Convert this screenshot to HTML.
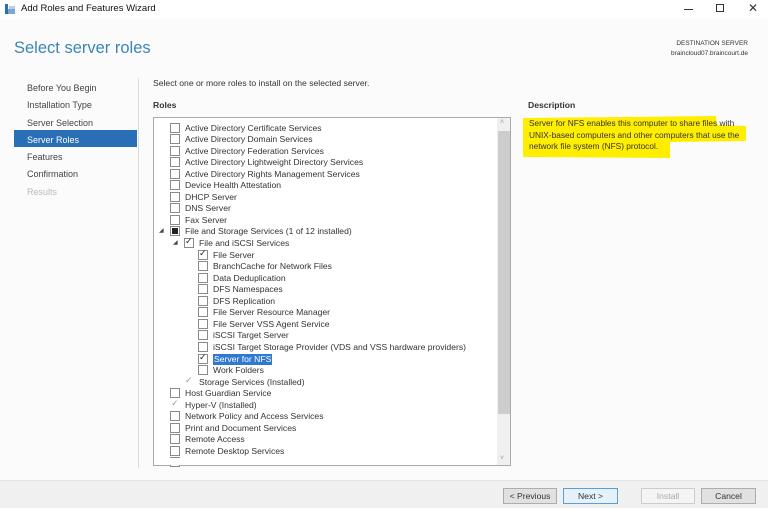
<!DOCTYPE html>
<html><head><style>
*{margin:0;padding:0;box-sizing:border-box}
body{width:768px;height:508px;overflow:hidden;background:#fbfbfb;font-family:"Liberation Sans",sans-serif;font-size:8.6px;color:#222;position:relative}
.a{position:absolute;white-space:nowrap}
.cb{position:absolute;width:10px;height:10px;border:1px solid #8a8a8a;background:#fff}
.row{position:absolute;height:11px;line-height:11px}
</style></head><body>
<div class="a" style="left:0;top:0;width:768px;height:19px;background:#fff"></div>
<svg class="a" style="left:4px;top:3px" width="12" height="12"><rect x="1" y="1" width="3" height="10" fill="#2d6db5"/><rect x="4" y="6" width="7" height="5" fill="#7aa7d6"/><rect x="5" y="3" width="6" height="3" fill="#bcd"/></svg>
<div class="a" style="left:21px;top:3px;font-size:9.5px;color:#111">Add Roles and Features Wizard</div>
<div class="a" style="left:684px;top:9px;width:9px;height:1px;background:#333"></div>
<div class="a" style="left:716px;top:4px;width:8px;height:8px;border:1px solid #333"></div>
<div class="a" style="left:748px;top:1px;font-size:12px;color:#333">✕</div>
<div class="a" style="left:14px;top:39px;font-size:16.5px;color:#3a86b8">Select server roles</div>
<div class="a" style="right:20px;top:39px;font-size:6.5px;color:#333;text-align:right;line-height:10px">DESTINATION SERVER<br>braincloud07.braincourt.de</div>
<div class="a" style="left:138px;top:78px;width:1px;height:390px;background:#ddd"></div>
<div class="a" style="left:14px;top:130px;width:123px;height:17px;background:#2a6fb5"></div>
<div class="a" style="left:27px;top:80px;font-size:9px;color:#444;line-height:17.3px">Before You Begin<br>Installation Type<br>Server Selection<br><span style="color:#fff">Server Roles</span><br>Features<br>Confirmation<br><span style="color:#bbb">Results</span></div>
<div class="a" style="left:153px;top:78px;color:#333">Select one or more roles to install on the selected server.</div>
<div class="a" style="left:153px;top:100px;font-weight:bold;color:#333">Roles</div>
<div class="a" style="left:528px;top:100px;font-weight:bold;color:#333">Description</div>
<svg class="a" style="left:520px;top:110px" width="230" height="52"><path d="M3 8 L196 6 L197 15 L226 16 L226 31 L150 32 L150 48 L3 47 Z" fill="#ffee00"/></svg>
<div class="a" style="left:529px;top:118px;font-size:8.3px;color:#333;line-height:11.5px">Server for NFS enables this computer to share files with<br>UNIX-based computers and other computers that use the<br>network file system (NFS) protocol.</div>
<div class="a" style="left:153px;top:117px;width:358px;height:349px;border:1px solid #aaa;background:#fff;overflow:hidden">
<div class="a" style="left:343px;top:0;width:14px;height:348px;background:#f0f0f0"></div>
<div class="a" style="left:344px;top:13px;width:12px;height:283px;background:#cdcdcd"></div>
<div class="a" style="left:346px;top:1px;font-size:7px;color:#999">˄</div>
<div class="a" style="left:346px;top:337px;font-size:7px;color:#999">˅</div>
</div>
<div id="L"></div>
<script>
var items=[[0,"Active Directory Certificate Services"],[0,"Active Directory Domain Services"],[0,"Active Directory Federation Services"],[0,"Active Directory Lightweight Directory Services"],[0,"Active Directory Rights Management Services"],[0,"Device Health Attestation"],[0,"DHCP Server"],[0,"DNS Server"],[0,"Fax Server"],[0,"File and Storage Services (1 of 12 installed)","p",1],[1,"File and iSCSI Services","c",1],[2,"File Server","c"],[2,"BranchCache for Network Files"],[2,"Data Deduplication"],[2,"DFS Namespaces"],[2,"DFS Replication"],[2,"File Server Resource Manager"],[2,"File Server VSS Agent Service"],[2,"iSCSI Target Server"],[2,"iSCSI Target Storage Provider (VDS and VSS hardware providers)"],[2,"Server for NFS","c",0,1],[2,"Work Folders"],[1,"Storage Services (Installed)","g"],[0,"Host Guardian Service"],[0,"Hyper-V (Installed)","g"],[0,"Network Policy and Access Services"],[0,"Print and Document Services"],[0,"Remote Access"],[0,"Remote Desktop Services"],[0,"Volume Activation Services"]];
var h="";
items.forEach(function(it,i){var y=122.5+i*11.55;if(y>458)return;var cx=170+it[0]*14;
if(it[3])h+='<div class="a" style="left:'+(cx-11)+'px;top:'+(y+1)+'px;font-size:6px;color:#444">◢</div>';
var st=it[2]=="g"?"border-color:transparent;background:transparent":"";
h+='<div class="cb" style="left:'+cx+'px;top:'+y+'px;'+st+'"></div>';
if(it[2]=="p")h+='<div class="a" style="left:'+(cx+2)+'px;top:'+(y+2)+'px;width:6px;height:6px;background:#222"></div>';
if(it[2]=="c"||it[2]=="g")h+='<div class="a" style="left:'+(cx+1)+'px;top:'+(y-2)+'px;font-size:9px;color:'+(it[2]=="g"?"#999":"#222")+'">✓</div>';
var tx=cx+15;
h+='<div class="row a" style="left:'+tx+'px;top:'+y+'px;'+(it[4]?'background:#2f7ad0;color:#fff;padding:0 1px;':'color:#333;')+'">'+it[1]+'</div>';});
document.getElementById("L").innerHTML=h;
</script>
<div class="a" style="left:154px;top:458px;width:343px;height:7px;background:#fff"></div>
<div class="a" style="left:0;top:480px;width:768px;height:28px;background:#f0f0f0;border-top:1px solid #e4e4e4"></div>
<div class="a" style="left:503px;top:488px;width:54px;height:16px;border:1px solid #adadad;background:#e1e1e1;text-align:center;line-height:14px;color:#333">&lt; Previous</div>
<div class="a" style="left:563px;top:488px;width:55px;height:16px;border:1px solid #5a9fd8;background:#e5f1fb;text-align:center;line-height:14px;color:#333">Next &gt;</div>
<div class="a" style="left:641px;top:488px;width:54px;height:16px;border:1px solid #ccc;background:#f4f4f4;text-align:center;line-height:14px;color:#aaa">Install</div>
<div class="a" style="left:701px;top:488px;width:55px;height:16px;border:1px solid #adadad;background:#e1e1e1;text-align:center;line-height:14px;color:#333">Cancel</div>
</body></html>
